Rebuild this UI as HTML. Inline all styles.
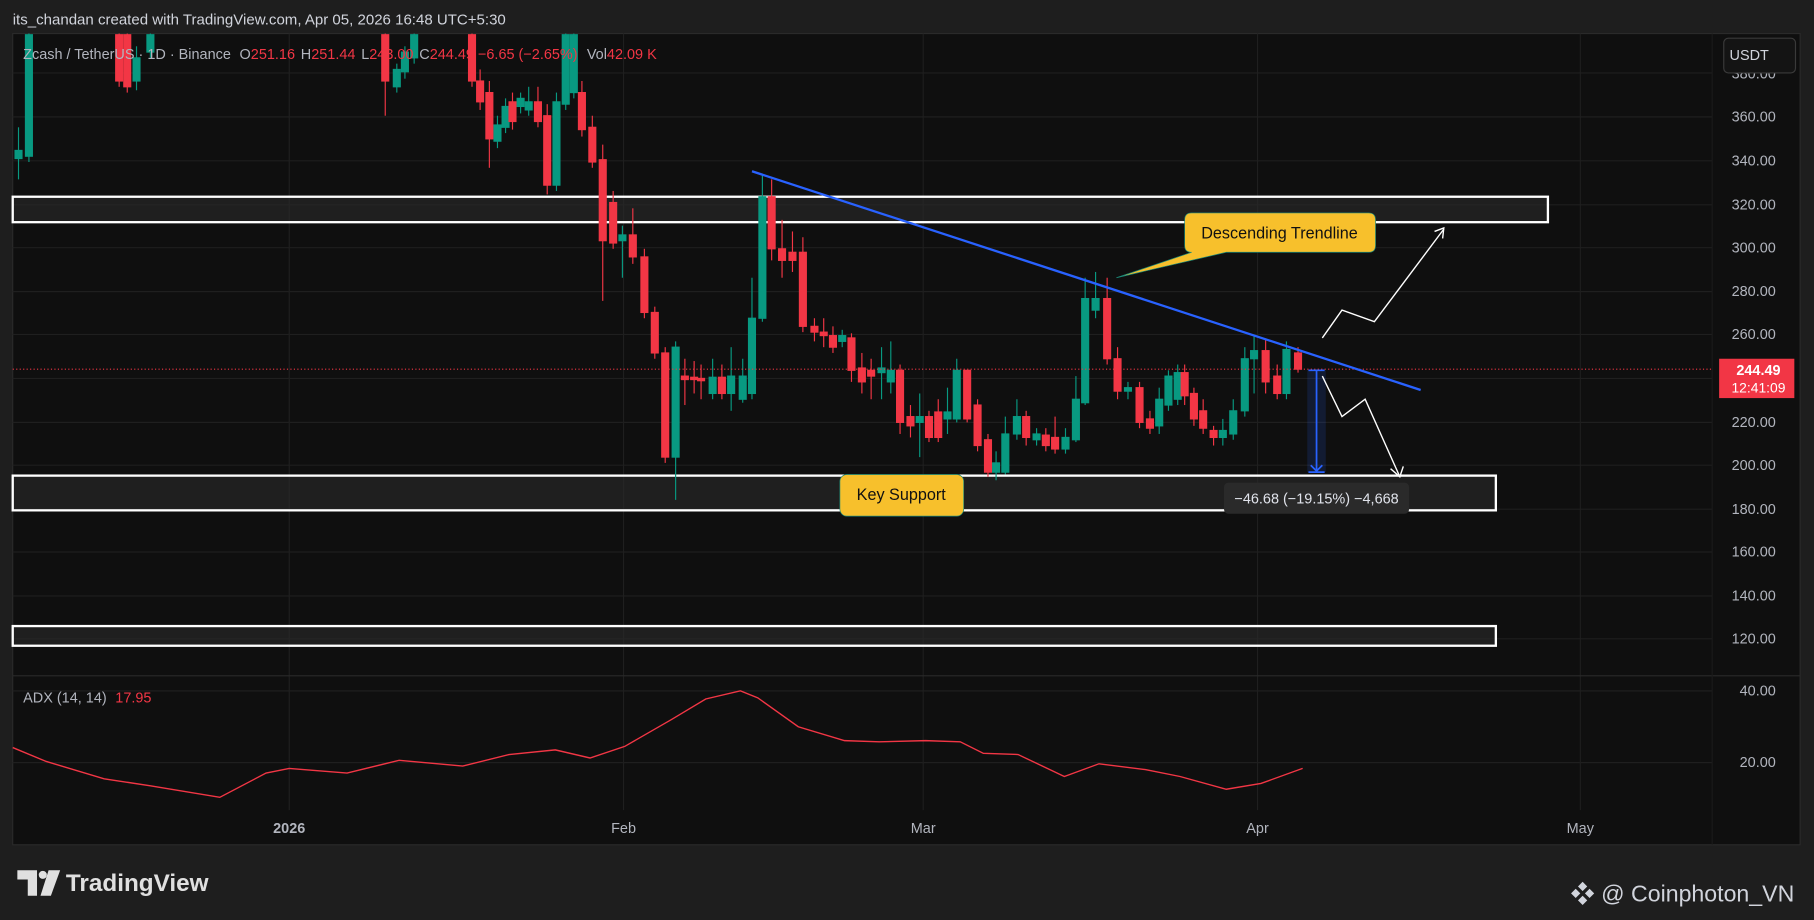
<!DOCTYPE html>
<html><head><meta charset="utf-8"><style>
html,body{margin:0;padding:0;background:#1e1e1e;width:1814px;height:920px;overflow:hidden}
svg{display:block}
text{font-family:"Liberation Sans",sans-serif}
</style></head><body>
<svg width="1814" height="920" viewBox="0 0 1568 795" preserveAspectRatio="none" xmlns="http://www.w3.org/2000/svg">
<rect width="1568" height="795" fill="#1e1e1e"/>
<text x="11" y="21" font-size="13" fill="#d1d4dc">its_chandan created with TradingView.com, Apr 05, 2026 16:48 UTC+5:30</text>
<rect x="11" y="29" width="1545" height="701" fill="#0f0f0f" stroke="#2a2a2a" stroke-width="1"/>
<!-- grid -->
<g stroke="#1f1f1f" stroke-width="1">
<line x1="11" y1="63" x2="1480" y2="63"/><line x1="11" y1="101" x2="1480" y2="101"/><line x1="11" y1="139" x2="1480" y2="139"/><line x1="11" y1="177" x2="1480" y2="177"/><line x1="11" y1="214" x2="1480" y2="214"/><line x1="11" y1="252" x2="1480" y2="252"/><line x1="11" y1="289" x2="1480" y2="289"/><line x1="11" y1="327" x2="1480" y2="327"/><line x1="11" y1="365" x2="1480" y2="365"/><line x1="11" y1="402" x2="1480" y2="402"/><line x1="11" y1="440" x2="1480" y2="440"/><line x1="11" y1="477" x2="1480" y2="477"/><line x1="11" y1="515" x2="1480" y2="515"/><line x1="11" y1="552" x2="1480" y2="552"/>
<line x1="11" y1="597" x2="1480" y2="597"/><line x1="11" y1="659" x2="1480" y2="659"/>
<line x1="250" y1="29" x2="250" y2="700"/><line x1="539" y1="29" x2="539" y2="700"/><line x1="798" y1="29" x2="798" y2="700"/><line x1="1087" y1="29" x2="1087" y2="700"/><line x1="1366" y1="29" x2="1366" y2="700"/>
</g>
<line x1="11" y1="584" x2="1556" y2="584" stroke="#2a2a2a"/>
<line x1="1480" y1="29" x2="1480" y2="730" stroke="#1a1a1a"/>
<!-- zones -->
<rect x="11" y="170" width="1327" height="22" fill="#2a2a2a" fill-opacity="0.6" stroke="#fff" stroke-width="2"/>
<rect x="11" y="411" width="1282" height="30" fill="#2a2a2a" fill-opacity="0.6" stroke="#fff" stroke-width="2"/>
<rect x="11" y="541" width="1282" height="17" fill="#2a2a2a" fill-opacity="0.6" stroke="#fff" stroke-width="2"/>
<!-- candles -->
<g stroke-width="1">
<g fill="#089981" stroke="#089981">
<line x1="16" y1="110" x2="16" y2="155"/><rect x="13" y="130" width="6" height="7"/>
<line x1="25" y1="29" x2="25" y2="140"/><rect x="22" y="30" width="6" height="105"/>
<line x1="118" y1="40" x2="118" y2="78"/><rect x="115" y="50" width="6" height="20"/>
<line x1="130" y1="29" x2="130" y2="50"/><rect x="127" y="30" width="6" height="15"/>
<line x1="343" y1="55" x2="343" y2="80"/><rect x="340" y="60" width="6" height="15"/>
<line x1="350" y1="40" x2="350" y2="68"/><rect x="347" y="45" width="6" height="17"/>
<line x1="358" y1="29" x2="358" y2="55"/><rect x="355" y="30" width="6" height="20"/>
<line x1="430" y1="100" x2="430" y2="128"/><rect x="427" y="108" width="6" height="14"/>
<line x1="437" y1="85" x2="437" y2="115"/><rect x="434" y="92" width="6" height="18"/>
<line x1="450" y1="80" x2="450" y2="98"/><rect x="447" y="85" width="6" height="7"/>
<line x1="457" y1="75" x2="457" y2="100"/><rect x="454" y="88" width="6" height="7"/>
<line x1="481" y1="80" x2="481" y2="165"/><rect x="478" y="88" width="6" height="72"/>
<line x1="489" y1="29" x2="489" y2="95"/><rect x="486" y="30" width="6" height="60"/>
<line x1="496" y1="29" x2="496" y2="85"/><rect x="493" y="30" width="6" height="50"/>
<line x1="538" y1="195" x2="538" y2="240"/><rect x="535" y="203" width="6" height="5"/>
<line x1="584" y1="295" x2="584" y2="432"/><rect x="581" y="300" width="6" height="95"/>
<line x1="616" y1="310" x2="616" y2="345"/><rect x="613" y="326" width="6" height="14"/>
<line x1="632" y1="300" x2="632" y2="355"/><rect x="629" y="325" width="6" height="15"/>
<line x1="642" y1="310" x2="642" y2="348"/><rect x="639" y="325" width="6" height="20"/>
<line x1="650" y1="240" x2="650" y2="345"/><rect x="647" y="275" width="6" height="65"/>
<line x1="659" y1="150" x2="659" y2="278"/><rect x="656" y="170" width="6" height="105"/>
<line x1="728" y1="285" x2="728" y2="300"/><rect x="725" y="290" width="6" height="5"/>
<line x1="762" y1="300" x2="762" y2="345"/><rect x="759" y="318" width="6" height="4"/>
<line x1="770" y1="295" x2="770" y2="340"/><rect x="767" y="320" width="6" height="10"/>
<line x1="795" y1="340" x2="795" y2="395"/><rect x="792" y="360" width="6" height="5"/>
<line x1="819" y1="335" x2="819" y2="375"/><rect x="816" y="356" width="6" height="6"/>
<line x1="827" y1="310" x2="827" y2="365"/><rect x="824" y="320" width="6" height="42"/>
<line x1="861" y1="390" x2="861" y2="415"/><rect x="858" y="400" width="6" height="8"/>
<line x1="869" y1="360" x2="869" y2="410"/><rect x="866" y="375" width="6" height="33"/>
<line x1="879" y1="345" x2="879" y2="380"/><rect x="876" y="360" width="6" height="15"/>
<line x1="896" y1="370" x2="896" y2="385"/><rect x="893" y="375" width="6" height="5"/>
<line x1="921" y1="370" x2="921" y2="392"/><rect x="918" y="378" width="6" height="10"/>
<line x1="930" y1="325" x2="930" y2="382"/><rect x="927" y="345" width="6" height="35"/>
<line x1="938" y1="240" x2="938" y2="350"/><rect x="935" y="258" width="6" height="90"/>
<line x1="947" y1="235" x2="947" y2="275"/><rect x="944" y="258" width="6" height="10"/>
<line x1="975" y1="330" x2="975" y2="345"/><rect x="972" y="335" width="6" height="3"/>
<line x1="1002" y1="335" x2="1002" y2="375"/><rect x="999" y="345" width="6" height="23"/>
<line x1="1010" y1="320" x2="1010" y2="355"/><rect x="1007" y="325" width="6" height="25"/>
<line x1="1018" y1="315" x2="1018" y2="350"/><rect x="1015" y="322" width="6" height="23"/>
<line x1="1057" y1="362" x2="1057" y2="385"/><rect x="1054" y="372" width="6" height="6"/>
<line x1="1066" y1="345" x2="1066" y2="380"/><rect x="1063" y="355" width="6" height="20"/>
<line x1="1076" y1="300" x2="1076" y2="360"/><rect x="1073" y="310" width="6" height="45"/>
<line x1="1084" y1="290" x2="1084" y2="340"/><rect x="1081" y="303" width="6" height="7"/>
<line x1="1112" y1="295" x2="1112" y2="345"/><rect x="1109" y="302" width="6" height="38"/>
</g>
<g fill="#f23645" stroke="#f23645">
<line x1="103" y1="29" x2="103" y2="75"/><rect x="100" y="30" width="6" height="40"/>
<line x1="110" y1="29" x2="110" y2="80"/><rect x="107" y="30" width="6" height="45"/>
<line x1="333" y1="29" x2="333" y2="100"/><rect x="330" y="30" width="6" height="40"/>
<line x1="408" y1="29" x2="408" y2="75"/><rect x="405" y="30" width="6" height="40"/>
<line x1="415" y1="60" x2="415" y2="95"/><rect x="412" y="70" width="6" height="18"/>
<line x1="423" y1="70" x2="423" y2="145"/><rect x="420" y="80" width="6" height="40"/>
<line x1="443" y1="80" x2="443" y2="112"/><rect x="440" y="88" width="6" height="17"/>
<line x1="465" y1="75" x2="465" y2="110"/><rect x="462" y="88" width="6" height="17"/>
<line x1="473" y1="90" x2="473" y2="168"/><rect x="470" y="100" width="6" height="60"/>
<line x1="503" y1="70" x2="503" y2="118"/><rect x="500" y="80" width="6" height="32"/>
<line x1="512" y1="100" x2="512" y2="145"/><rect x="509" y="110" width="6" height="30"/>
<line x1="521" y1="125" x2="521" y2="260"/><rect x="518" y="138" width="6" height="70"/>
<line x1="530" y1="165" x2="530" y2="215"/><rect x="527" y="175" width="6" height="35"/>
<line x1="547" y1="180" x2="547" y2="228"/><rect x="544" y="203" width="6" height="19"/>
<line x1="557" y1="215" x2="557" y2="275"/><rect x="554" y="222" width="6" height="48"/>
<line x1="566" y1="265" x2="566" y2="310"/><rect x="563" y="270" width="6" height="35"/>
<line x1="575" y1="300" x2="575" y2="400"/><rect x="572" y="305" width="6" height="90"/>
<line x1="592" y1="310" x2="592" y2="350"/><rect x="589" y="325" width="6" height="3"/>
<line x1="600" y1="312" x2="600" y2="340"/><rect x="597" y="326" width="6" height="2"/>
<line x1="606" y1="315" x2="606" y2="345"/><rect x="603" y="327" width="6" height="2"/>
<line x1="624" y1="315" x2="624" y2="345"/><rect x="621" y="326" width="6" height="14"/>
<line x1="667" y1="155" x2="667" y2="225"/><rect x="664" y="170" width="6" height="45"/>
<line x1="676" y1="190" x2="676" y2="240"/><rect x="673" y="215" width="6" height="10"/>
<line x1="685" y1="200" x2="685" y2="235"/><rect x="682" y="218" width="6" height="7"/>
<line x1="694" y1="205" x2="694" y2="287"/><rect x="691" y="218" width="6" height="64"/>
<line x1="704" y1="275" x2="704" y2="295"/><rect x="701" y="282" width="6" height="5"/>
<line x1="712" y1="275" x2="712" y2="300"/><rect x="709" y="287" width="6" height="3"/>
<line x1="720" y1="282" x2="720" y2="305"/><rect x="717" y="290" width="6" height="10"/>
<line x1="736" y1="288" x2="736" y2="330"/><rect x="733" y="292" width="6" height="28"/>
<line x1="745" y1="305" x2="745" y2="340"/><rect x="742" y="318" width="6" height="12"/>
<line x1="753" y1="310" x2="753" y2="345"/><rect x="750" y="320" width="6" height="5"/>
<line x1="778" y1="315" x2="778" y2="375"/><rect x="775" y="320" width="6" height="45"/>
<line x1="787" y1="350" x2="787" y2="378"/><rect x="784" y="360" width="6" height="8"/>
<line x1="803" y1="355" x2="803" y2="382"/><rect x="800" y="360" width="6" height="18"/>
<line x1="811" y1="345" x2="811" y2="382"/><rect x="808" y="356" width="6" height="22"/>
<line x1="836" y1="320" x2="836" y2="365"/><rect x="833" y="320" width="6" height="42"/>
<line x1="845" y1="345" x2="845" y2="390"/><rect x="842" y="350" width="6" height="35"/>
<line x1="854" y1="375" x2="854" y2="412"/><rect x="851" y="380" width="6" height="28"/>
<line x1="887" y1="355" x2="887" y2="385"/><rect x="884" y="360" width="6" height="18"/>
<line x1="904" y1="370" x2="904" y2="390"/><rect x="901" y="376" width="6" height="9"/>
<line x1="912" y1="360" x2="912" y2="392"/><rect x="909" y="378" width="6" height="10"/>
<line x1="957" y1="240" x2="957" y2="315"/><rect x="954" y="258" width="6" height="52"/>
<line x1="966" y1="300" x2="966" y2="345"/><rect x="963" y="310" width="6" height="28"/>
<line x1="985" y1="330" x2="985" y2="370"/><rect x="982" y="335" width="6" height="30"/>
<line x1="994" y1="355" x2="994" y2="375"/><rect x="991" y="362" width="6" height="8"/>
<line x1="1024" y1="315" x2="1024" y2="350"/><rect x="1021" y="322" width="6" height="20"/>
<line x1="1032" y1="335" x2="1032" y2="368"/><rect x="1029" y="340" width="6" height="22"/>
<line x1="1040" y1="345" x2="1040" y2="375"/><rect x="1037" y="355" width="6" height="15"/>
<line x1="1049" y1="368" x2="1049" y2="385"/><rect x="1046" y="372" width="6" height="6"/>
<line x1="1094" y1="293" x2="1094" y2="340"/><rect x="1091" y="303" width="6" height="27"/>
<line x1="1104" y1="315" x2="1104" y2="345"/><rect x="1101" y="325" width="6" height="15"/>
<line x1="1122" y1="300" x2="1122" y2="322"/><rect x="1119" y="305" width="6" height="14"/>
</g>
</g>
<!-- last price line -->
<line x1="11" y1="319" x2="1480" y2="319" stroke="#f23645" stroke-width="1" stroke-dasharray="1,2"/>
<!-- trendline -->
<line x1="650" y1="148" x2="1228" y2="337" stroke="#2962ff" stroke-width="2"/>
<!-- measurement -->
<rect x="1130" y="320" width="16" height="88" fill="#2962ff" fill-opacity="0.15"/>
<line x1="1138" y1="320" x2="1138" y2="407" stroke="#2962ff" stroke-width="1.5"/>
<line x1="1131" y1="320" x2="1145" y2="320" stroke="#2962ff" stroke-width="1.5"/>
<line x1="1131" y1="408" x2="1145" y2="408" stroke="#2962ff" stroke-width="1.5"/>
<polyline points="1133,402 1138,407 1143,402" fill="none" stroke="#2962ff" stroke-width="1.5"/>
<rect x="1058" y="417" width="160" height="27" rx="4" fill="#2a2a2a"/>
<text x="1138" y="435" font-size="12.5" fill="#e0e3eb" text-anchor="middle">−46.68 (−19.15%) −4,668</text>
<!-- arrows -->
<polyline points="1143,292 1160,268 1188,278 1248,198" fill="none" stroke="#fff" stroke-width="1.2"/>
<polyline points="1240,200 1248,197 1247,206" fill="none" stroke="#fff" stroke-width="1.2"/>
<polyline points="1143,325 1160,360 1180,345 1210,412" fill="none" stroke="#fff" stroke-width="1.2"/>
<polyline points="1202,405 1210,412 1213,403" fill="none" stroke="#fff" stroke-width="1.2"/>
<!-- callouts -->
<path d="M1030,184 H1183 Q1189,184 1189,190 V212 Q1189,218 1183,218 H1060 L965,240 L1030,218 Q1024,218 1024,212 V190 Q1024,184 1030,184 Z" fill="#f7c02c" stroke="#1b8a78" stroke-width="0.6"/>
<text x="1106" y="206" font-size="14" fill="#111" text-anchor="middle">Descending Trendline</text>
<rect x="726" y="410" width="107" height="36" rx="6" fill="#f7c02c" stroke="#1b8a78" stroke-width="0.6"/>
<text x="779" y="432" font-size="14" fill="#111" text-anchor="middle">Key Support</text>
<!-- legend -->
<text x="20" y="51" font-size="12.5" fill="#b2b5be">Zcash / TetherUS · 1D · Binance  <tspan dx="4">O</tspan><tspan fill="#f23645">251.16</tspan><tspan dx="5">H</tspan><tspan fill="#f23645">251.44</tspan><tspan dx="5">L</tspan><tspan fill="#f23645">243.00</tspan><tspan dx="5">C</tspan><tspan fill="#f23645">244.49  −6.65 (−2.65%)</tspan><tspan dx="8">Vol</tspan><tspan fill="#f23645">42.09 K</tspan></text>
<!-- price axis -->
<g font-size="12.5" fill="#b2b5be" text-anchor="end">
<text x="1535" y="68">380.00</text><text x="1535" y="105">360.00</text><text x="1535" y="143">340.00</text><text x="1535" y="181">320.00</text><text x="1535" y="218">300.00</text><text x="1535" y="256">280.00</text><text x="1535" y="293">260.00</text><text x="1535" y="369">220.00</text><text x="1535" y="406">200.00</text><text x="1535" y="444">180.00</text><text x="1535" y="481">160.00</text><text x="1535" y="519">140.00</text><text x="1535" y="556">120.00</text><text x="1535" y="601">40.00</text><text x="1535" y="663">20.00</text>
</g>
<rect x="1490" y="33" width="62" height="30" rx="4" fill="#141414" stroke="#3a3a3a"/>
<text x="1512" y="52" font-size="12.5" fill="#d1d4dc" text-anchor="middle">USDT</text>
<rect x="1486" y="310" width="65" height="34" fill="#f23645"/>
<text x="1520" y="324" font-size="12.5" fill="#fff" text-anchor="middle" font-weight="bold">244.49</text>
<text x="1520" y="339" font-size="12" fill="#fff" text-anchor="middle">12:41:09</text>
<!-- ADX -->
<text x="20" y="607" font-size="12.5" fill="#b2b5be">ADX (14, 14) <tspan dx="4" fill="#f23645">17.95</tspan></text>
<polyline fill="none" stroke="#f23645" stroke-width="1.2" points="11,646 40,658 90,673 130,679 190,689 230,668 250,664 300,668 345,657 400,662 440,652 480,648 510,655 540,645 580,622 610,604 640,597 655,603 690,628 730,640 760,641 800,640 830,641 850,651 880,652 920,671 950,660 990,665 1020,671 1060,682 1090,677 1126,664"/>
<!-- time axis -->
<g font-size="12.5" fill="#b2b5be" text-anchor="middle">
<text x="250" y="720" font-weight="bold">2026</text><text x="539" y="720">Feb</text><text x="798" y="720">Mar</text><text x="1087" y="720">Apr</text><text x="1366" y="720">May</text>
</g>
<!-- footer -->
<g fill="#e0e0e0">
<path d="M15,752 H32 V774 H24 V760 H15 Z"/>
<circle cx="37" cy="756" r="3.5"/>
<path d="M42,752 H52 L44,774 H35 Z"/>
</g>
<text x="57" y="770" font-size="21" font-weight="bold" fill="#e0e0e0">TradingView</text>
<g fill="#d1d4dc" transform="translate(1368,772)">
<path d="M0,-10 L4,-6 L0,-2 L-4,-6 Z M-6,-4 L-2,0 L-6,4 L-10,0 Z M6,-4 L10,0 L6,4 L2,0 Z M0,2 L4,6 L0,10 L-4,6 Z"/>
</g>
<text x="1384" y="779" font-size="20" fill="#d1d4dc">@ Coinphoton_VN</text>
</svg>
</body></html>
